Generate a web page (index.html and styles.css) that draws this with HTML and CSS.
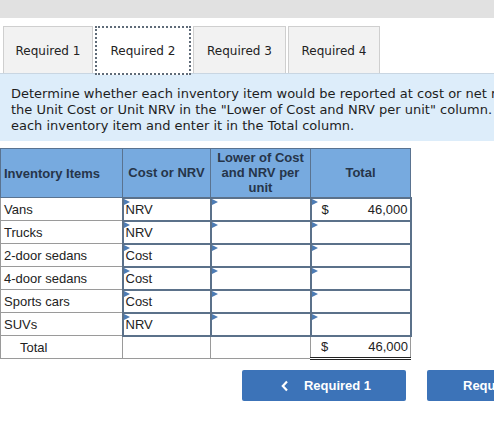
FILE: index.html
```html
<!DOCTYPE html>
<html>
<head>
<meta charset="utf-8">
<link rel="stylesheet" href="styles.css">
</head>
<body>
<div class="topbar"></div>
<div class="tabs">
  <div class="tab">Required 1</div>
  <div class="tab active">Required 2</div>
  <div class="tab">Required 3</div>
  <div class="tab">Required 4</div>
</div>
<div class="panel">
  <p class="instr">Determine whether each inventory item would be reported at cost or net realizable value (NRV). Enter<br>the Unit Cost or Unit NRV in the "Lower of Cost and NRV per unit" column. Then compute the value of<br>each inventory item and enter it in the Total column.</p>
</div>
<table class="grid">
  <colgroup>
    <col class="c1"><col class="c2"><col class="c3"><col class="c4">
  </colgroup>
  <thead>
    <tr>
      <th class="left">Inventory Items</th>
      <th>Cost or NRV</th>
      <th class="multi">Lower of Cost<br>and NRV per<br>unit</th>
      <th>Total</th>
    </tr>
  </thead>
  <tbody>
    <tr>
      <td>Vans</td>
      <td class="inp"><span class="mark"></span>NRV</td>
      <td class="inp"><span class="mark"></span></td>
      <td class="inp"><span class="mark"></span><div class="money"><span>$</span><span>46,000</span></div></td>
    </tr>
    <tr>
      <td>Trucks</td>
      <td class="inp"><span class="mark"></span>NRV</td>
      <td class="inp"><span class="mark"></span></td>
      <td class="inp"><span class="mark"></span></td>
    </tr>
    <tr>
      <td>2-door sedans</td>
      <td class="inp"><span class="mark"></span>Cost</td>
      <td class="inp"><span class="mark"></span></td>
      <td class="inp"><span class="mark"></span></td>
    </tr>
    <tr>
      <td>4-door sedans</td>
      <td class="inp"><span class="mark"></span>Cost</td>
      <td class="inp"><span class="mark"></span></td>
      <td class="inp"><span class="mark"></span></td>
    </tr>
    <tr>
      <td>Sports cars</td>
      <td class="inp"><span class="mark"></span>Cost</td>
      <td class="inp"><span class="mark"></span></td>
      <td class="inp"><span class="mark"></span></td>
    </tr>
    <tr>
      <td>SUVs</td>
      <td class="inp"><span class="mark"></span>NRV</td>
      <td class="inp"><span class="mark"></span></td>
      <td class="inp"><span class="mark"></span></td>
    </tr>
    <tr class="totalrow">
      <td class="indent">Total</td>
      <td></td>
      <td></td>
      <td class="grand"><div class="money"><span>$</span><span>46,000</span></div></td>
    </tr>
  </tbody>
</table>
<div class="nav">
  <button class="btn prev"><svg class="chev" width="8" height="12" viewBox="0 0 8 12"><polyline points="6,1.5 1.8,6 6,10.5" fill="none" stroke="#fff" stroke-width="2.2"/></svg><span>Required 1</span></button>
  <button class="btn next"><span>Required 3</span><svg class="chev" width="8" height="12" viewBox="0 0 8 12"><polyline points="2,1.5 6.2,6 2,10.5" fill="none" stroke="#fff" stroke-width="2.2"/></svg></button>
</div>
</body>
</html>
```

FILE: styles.css
```css
html, body {
  margin: 0;
  padding: 0;
  overflow: hidden;
  background: #fff;
}
body {
  width: 494px;
  height: 426px;
  font-family: "DejaVu Sans", Verdana, sans-serif;
  color: #222;
}
.topbar {
  height: 18px;
  background: #e1e1e1;
}
.tabs {
  display: flex;
  gap: 2px;
  margin: 8px 0 0 3px;
  height: 47px;
  position: relative;
  z-index: 1;
}
.tab {
  box-sizing: border-box;
  height: 47px;
  width: 90px;
  display: flex;
  align-items: center;
  justify-content: center;
  padding-top: 2px;
  font-size: 12px;
  color: #222;
  background: #f2f2f2;
  border: 1px solid #cfcfcf;
  border-bottom: none;
}
.tab.active {
  width: 96px;
  height: 49px;
  padding-top: 0;
  background: #fff;
  border: 2px dotted #5f6b78;
}
.tab:nth-child(3) { width: 93px; }
.tab:nth-child(4) { width: 92px; }
.panel {
  width: 494px;
  height: 68px;
  box-sizing: border-box;
  background: #ddedfa;
  border-top: 1px solid #c9d6e2;
  padding: 12px 0 0 11px;
  overflow: hidden;
}
.instr {
  margin: 0;
  white-space: nowrap;
  font-size: 13px;
  line-height: 16px;
  color: #1e1e1e;
}
.grid {
  margin-top: 7px;
  border-collapse: collapse;
  table-layout: fixed;
  width: 410px;
  font-family: "Liberation Sans", Arial, sans-serif;
  font-size: 13px;
  color: #222;
}
.c1 { width: 122px; }
.c2 { width: 88px; }
.c3 { width: 100px; }
.c4 { width: 100px; }
.grid th {
  height: 49px;
  padding: 0;
  box-sizing: border-box;
  background: #77aadf;
  color: #26354a;
  font-weight: bold;
  font-size: 13px;
  border: 1px solid #5a7390;
  text-align: center;
  vertical-align: middle;
}
.grid th.left {
  text-align: left;
  padding-left: 3px;
}
.grid th.multi {
  line-height: 15px;
}
.grid td {
  height: 23px;
  padding: 0 0 0 3px;
  box-sizing: border-box;
  border: 1px solid #9a9a9a;
  vertical-align: middle;
  white-space: nowrap;
}
.grid td.inp {
  position: relative;
  border: 2px solid #5b718a;
  padding-left: 2px;
}
.mark {
  position: absolute;
  left: 0;
  top: 0;
  width: 0;
  height: 0;
  border-top: 3px solid transparent;
  border-bottom: 3px solid transparent;
  border-left: 6px solid #4d7cb4;
}
.grid td.indent {
  padding-left: 19px;
}
.money {
  display: flex;
  justify-content: space-between;
  padding: 0 2px 0 8px;
}
.grid td.grand {
  border-bottom: 3px double #222;
  padding-left: 2px;
}
.nav {
  display: flex;
  gap: 21px;
  margin: 10px 0 0 242px;
}
.btn {
  flex: none;
  width: 164px;
  height: 31px;
  border: none;
  border-radius: 2px;
  background: #3c73b8;
  color: #fff;
  font-family: "Liberation Sans", Arial, sans-serif;
  font-weight: bold;
  font-size: 13px;
  display: flex;
  align-items: center;
  justify-content: center;
  gap: 15px;
  padding: 0;
}
.prev {
  padding-left: 4px;
}
.next {
  padding-left: 36px;
  justify-content: flex-start;
}
.chev {
  display: block;
}
```
